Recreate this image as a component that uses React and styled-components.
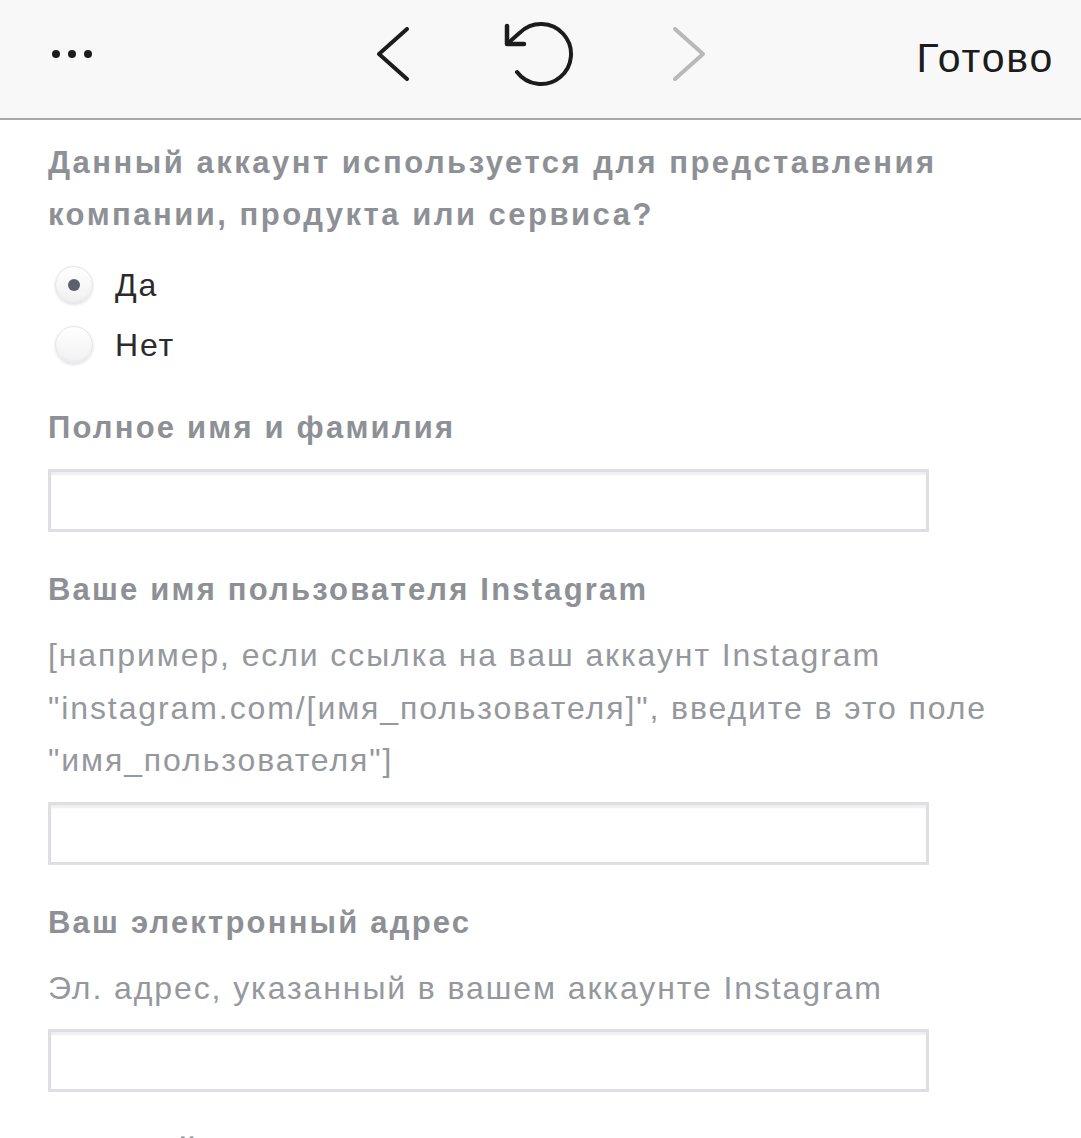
import React from "react";
import styled, { createGlobalStyle } from "styled-components";

const GlobalStyle = createGlobalStyle`
  html, body {
    margin: 0;
    padding: 0;
    background: #ffffff;
    font-family: "Liberation Sans", Arial, sans-serif;
  }
  * {
    box-sizing: border-box;
  }
`;

const fields = [
  { label: "Полное имя и фамилия" },
  {
    label: "Ваше имя пользователя Instagram",
    help: [
      "[например, если ссылка на ваш аккаунт Instagram",
      "\"instagram.com/[имя_пользователя]\", введите в это поле",
      "\"имя_пользователя\"]",
    ],
  },
  {
    label: "Ваш электронный адрес",
    help: ["Эл. адрес, указанный в вашем аккаунте Instagram"],
  },
];

const BackIcon = ({ color }) => (
  <svg width="34" height="54" viewBox="0 0 34 54">
    <polyline
      points="31,2 3,27 31,52"
      fill="none"
      stroke={color}
      strokeWidth="4"
      strokeLinecap="round"
      strokeLinejoin="round"
    />
  </svg>
);

const ForwardIcon = ({ color }) => (
  <svg width="34" height="54" viewBox="0 0 34 54">
    <polyline
      points="3,2 31,27 3,52"
      fill="none"
      stroke={color}
      strokeWidth="4"
      strokeLinecap="round"
      strokeLinejoin="round"
    />
  </svg>
);

const ReloadIcon = () => (
  <svg width="80" height="80" viewBox="0 0 80 80">
    <path
      d="M16 58 A30 30 0 1 0 19 18.6 L6 30"
      fill="none"
      stroke="#1c1c1c"
      strokeWidth="4"
      strokeLinecap="round"
      strokeLinejoin="round"
    />
    <path
      d="M6 12 V30 H23"
      fill="none"
      stroke="#1c1c1c"
      strokeWidth="4.5"
      strokeLinecap="round"
      strokeLinejoin="round"
    />
  </svg>
);

const App = () => {
  return (
    <>
      <GlobalStyle />
      <Page>
        <TopBar>
          <Dots>
            <Dot />
            <Dot />
            <Dot />
          </Dots>
          <NavGroup>
            <BackIcon color="#1c1c1c" />
            <ReloadIcon />
            <ForwardIcon color="#b9b9b9" />
          </NavGroup>
          <DoneButton>Готово</DoneButton>
        </TopBar>

        <Form>
          <Question>
            Данный аккаунт используется для представления
            <br />
            компании, продукта или сервиса?
          </Question>
          <RadioList>
            <RadioRow>
              <Radio checked />
              <RadioText>Да</RadioText>
            </RadioRow>
            <RadioRow>
              <Radio />
              <RadioText>Нет</RadioText>
            </RadioRow>
          </RadioList>

          {fields.map((f) => (
            <Field key={f.label}>
              <Label>{f.label}</Label>
              {f.help && (
                <Help>
                  {f.help.map((line) => (
                    <div key={line}>{line}</div>
                  ))}
                </Help>
              )}
              <Input />
            </Field>
          ))}

          <Field>
            <Label>Который у вас аккаунт</Label>
          </Field>
        </Form>
      </Page>
    </>
  );
};

const Page = styled.div`
  width: 1081px;
  height: 1138px;
  overflow: hidden;
  background: #ffffff;
`;

const TopBar = styled.div`
  height: 120px;
  display: grid;
  grid-template-columns: 1fr auto 1fr;
  align-items: center;
  background: #f8f8f8;
  border-bottom: 2px solid #a8a8a8;
  padding: 0 28px 10px 28px;
`;

const Dots = styled.div`
  display: flex;
  gap: 8px;
  margin-left: 24px;
  justify-self: start;
`;

const Dot = styled.span`
  width: 8px;
  height: 8px;
  border-radius: 50%;
  background: #1c1c1c;
`;

const NavGroup = styled.div`
  display: flex;
  align-items: center;
  gap: 91px;
  svg {
    display: block;
  }
`;

const DoneButton = styled.span`
  justify-self: end;
  font-size: 41px;
  color: #1c1c1c;
  letter-spacing: 1.8px;
  margin-right: -1px;
  padding-top: 8px;
`;

const Form = styled.div`
  padding: 17px 0 0 48px;
`;

const Question = styled.div`
  font-size: 31px;
  font-weight: bold;
  line-height: 52px;
  letter-spacing: 2.5px;
  color: #8d9095;
`;

const RadioList = styled.div`
  margin-top: 14px;
  margin-bottom: 27px;
`;

const RadioRow = styled.div`
  height: 60px;
  display: flex;
  align-items: center;
  gap: 22px;
`;

const Radio = styled.span`
  width: 38px;
  height: 38px;
  margin-left: 7px;
  border-radius: 50%;
  background: linear-gradient(#ffffff, #f1f1f3);
  border: 1px solid #e6e6ea;
  box-shadow: 0 1px 3px rgba(0, 0, 0, 0.12), inset 0 -2px 3px rgba(0, 0, 0, 0.03);
  display: flex;
  align-items: center;
  justify-content: center;
  &::after {
    content: "";
    width: 12px;
    height: 12px;
    border-radius: 50%;
    background: ${(p) => (p.checked ? "#5b606c" : "transparent")};
  }
`;

const RadioText = styled.span`
  font-size: 32px;
  letter-spacing: 1.8px;
  color: #2b2b2b;
`;

const Field = styled.div`
  margin-bottom: 32px;
`;

const Label = styled.div`
  font-size: 31px;
  font-weight: bold;
  line-height: 52px;
  letter-spacing: 2.2px;
  color: #8d9095;
`;

const Help = styled.div`
  margin-top: 13px;
  font-size: 32px;
  line-height: 52.5px;
  letter-spacing: 1.9px;
  color: #95989d;
`;

const Input = styled.div`
  margin-top: 15px;
  width: 881px;
  height: 63px;
  background: #ffffff;
  border: 3px solid #dfdfe3;
  box-shadow: inset 0 3px 2px #efeff2;
`;

export default App;
